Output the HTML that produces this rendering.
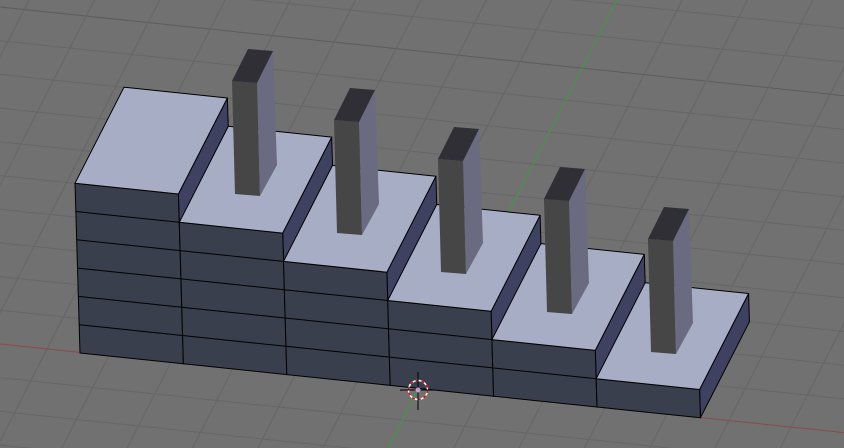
<!DOCTYPE html>
<html><head><meta charset="utf-8"><style>
html,body{margin:0;padding:0;background:#717171;overflow:hidden;width:844px;height:448px}
svg{display:block;overflow:hidden}
</style></head><body>
<svg id="s" width="844" height="448" viewBox="0 0 844 448" xmlns="http://www.w3.org/2000/svg">
<defs><clipPath id="c"><rect width="844" height="448"/></clipPath></defs>
<g clip-path="url(#c)">
<rect width="844" height="448" fill="#717171"/>
<g id="grid"></g>
<g id="scene"></g>
<g id="cursor">
<circle cx="418" cy="390" r="9.5" fill="none" stroke="#fff" stroke-width="1.5"/>
<circle cx="418" cy="390" r="9.5" fill="none" stroke="#d01010" stroke-width="1.5" stroke-dasharray="3 3"/>
<line x1="418" y1="372" x2="418" y2="410" stroke="#000" stroke-width="1"/>
<line x1="400" y1="390" x2="436" y2="390" stroke="#000" stroke-width="1"/>
<circle cx="418" cy="390" r="2.5" fill="#c89ad0"/>
</g>
</g>
</svg>
<script>
var NS="http://www.w3.org/2000/svg";
function el(p,t,a){var e=document.createElementNS(NS,t);for(var k in a)e.setAttribute(k,a[k]);p.appendChild(e);return e;}
var G=document.getElementById('grid'),S=document.getElementById('scene');
var sl=0.105;
for(var n=-6;n<=14;n++){
  var y0=344-n*33.7;
  if(n==0)continue;
  el(G,'line',{x1:0,y1:y0,x2:844,y2:y0+sl*844,stroke:(n%10==0)?'#5c5c5c':'#666666','stroke-width':1});
}
for(var m=-12;m<=10;m++){
  if(m==0)continue;
  var px=418+62*m,py=390+6.5*m;
  var xt=px+py*0.51, xb=px-(448-py)*0.51;
  el(G,'line',{x1:xt,y1:0,x2:xb,y2:448,stroke:(m%10==0)?'#5c5c5c':'#666666','stroke-width':1});
}
el(G,'line',{x1:0,y1:344,x2:844,y2:344+sl*844,stroke:'#8a4a4a','stroke-width':1});
el(G,'line',{x1:418+390*0.51,y1:0,x2:418-58*0.51,y2:448,stroke:'#3e9a3e','stroke-width':1});

function pts(a){return a.map(function(p){return p[0].toFixed(1)+','+p[1].toFixed(1)}).join(' ');}
function add(a,b){return [a[0]+b[0],a[1]+b[1]];}
function mul(a,k){return [a[0]*k,a[1]*k];}
var O=[80,353],U=[103.4,10.8],V=[-0.83,-28.3],D=[49,-96];
var TOP='#a8adc6',FRONT='#393f4c',SIDE='#3e4260';
var pb=[[235,194],[337,233],[441,272],[547,312],[651,352]];
function pillar(k){
  var P=pb[k],W=[25,2];
  var BL=P,BR=add(P,W),TL=add(P,[-3,-113]),TR=add(BR,[-3,-113]);
  var d=[16,-32];
  el(S,'polygon',{points:pts([BR,TR,add(TR,d),add(BR,[17,-31])]),fill:'#6a6b80'});
  el(S,'polygon',{points:pts([BL,BR,TR,TL]),fill:'#464646'});
  el(S,'polygon',{points:pts([TL,TR,add(TR,d),add(TL,d)]),fill:'#302f36'});
}
for(var i=0;i<6;i++){
  var h=6-i;
  var BL=add(O,mul(U,i)),BR=add(BL,U),TL=add(BL,mul(V,h)),TR=add(BR,mul(V,h));
  var st={stroke:'#000','stroke-width':1,'stroke-linejoin':'round'};
  function poly(p,f){var a={points:pts(p),fill:f};for(var k in st)a[k]=st[k];el(S,'polygon',a);}
  poly([BR,TR,add(TR,D),add(BR,D)],SIDE);
  poly([BL,BR,TR,TL],FRONT);
  poly([TL,TR,add(TR,D),add(TL,D)],TOP);
  for(var k=1;k<h;k++){
    var a=add(BL,mul(V,k)),b=add(BR,mul(V,k));
    el(S,'line',{x1:a[0],y1:a[1],x2:b[0],y2:b[1],stroke:'#000','stroke-width':1});
  }
  if(i>=1)pillar(i-1);
}
</script>
</body></html>
